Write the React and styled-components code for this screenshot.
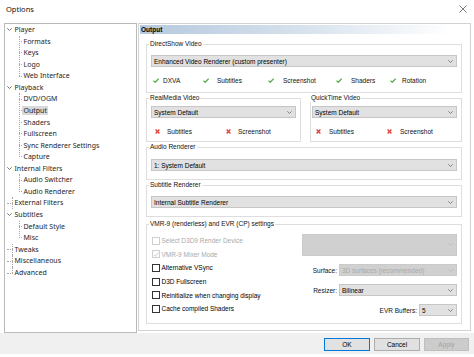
import React from "react";
import styled, { createGlobalStyle, css } from "styled-components";

const uiFont = `"Noto Sans", "Open Sans", sans-serif`;
const formFont = `"Liberation Sans", Arial, sans-serif`;

const GlobalStyle = createGlobalStyle`
  html, body {
    margin: 0;
    padding: 0;
    background: #fff;
  }
  body {
    font-family: ${formFont};
  }
  * {
    box-sizing: border-box;
  }
`;

const tree = [
  { label: "Player", children: ["Formats", "Keys", "Logo", "Web Interface"] },
  {
    label: "Playback",
    children: ["DVD/OGM", "Output", "Shaders", "Fullscreen", "Sync Renderer Settings", "Capture"],
  },
  { label: "Internal Filters", children: ["Audio Switcher", "Audio Renderer"] },
  { label: "External Filters" },
  { label: "Subtitles", children: ["Default Style", "Misc"] },
  { label: "Tweaks" },
  { label: "Miscellaneous" },
  { label: "Advanced" },
];

const dsFeatures = [
  { label: "DXVA", gap: 4 },
  { label: "Subtitles", gap: 8 },
  { label: "Screenshot", gap: 9 },
  { label: "Shaders", gap: 9 },
  { label: "Rotation", gap: 6 },
];

const vmrChecks = [
  { label: "Select D3D9 Render Device", disabled: true },
  { label: "VMR-9 Mixer Mode", disabled: true, checked: true },
  { label: "Alternative VSync" },
  { label: "D3D Fullscreen" },
  { label: "Reinitialize when changing display" },
  { label: "Cache compiled Shaders" },
];

const Check = () => (
  <svg width="6" height="5" viewBox="0 0 6 5">
    <path d="M0.5 2.6 L2.2 4.3 L5.6 0.6" fill="none" stroke="#5aad4e" strokeWidth="1.3" />
  </svg>
);

const Cross = () => (
  <svg width="5" height="5" viewBox="0 0 5 5">
    <path d="M0.6 0.6 L4.4 4.4 M4.4 0.6 L0.6 4.4" stroke="#e0413b" strokeWidth="1.4" />
  </svg>
);

const Chevron = ({ color = "#6d6d6d" }) => (
  <svg width="5" height="3" viewBox="0 0 5 3">
    <path d="M0.3 0.3 L2.5 2.5 L4.7 0.3" fill="none" stroke={color} strokeWidth="0.8" />
  </svg>
);

const Dropdown = ({ value, disabled, width }) => (
  <Select $disabled={disabled} $width={width}>
    <span>{value}</span>
    <Chevron color={disabled ? "#b8b8b8" : "#6d6d6d"} />
  </Select>
);

const Feature = ({ ok, label, gap }) => (
  <FeatureItem $gap={gap}>
    {ok ? <Check /> : <Cross />}
    <span>{label}</span>
  </FeatureItem>
);

const App = () => {
  return (
    <Window>
      <GlobalStyle />
      <TitleBar>
        <span>Options</span>
        <svg width="8" height="8" viewBox="0 0 8 8">
          <path d="M0.5 0.5 L7.5 7.5 M7.5 0.5 L0.5 7.5" stroke="#444" strokeWidth="0.7" />
        </svg>
      </TitleBar>

      <Body>
        <TreeBox>
          {tree.map((node, i) => (
            <Node key={node.label} $leaf={!node.children} $last={i === tree.length - 1}>
              <RootRow>
                <Slot $leaf={!node.children}>{node.children && <Chevron color="#555" />}</Slot>
                <NodeLabel>{node.label}</NodeLabel>
              </RootRow>
              {node.children && (
                <ChildList>
                  {node.children.map((child) => (
                    <ChildRow key={child}>
                      <Tick />
                      <NodeLabel $selected={child === "Output"}>{child}</NodeLabel>
                    </ChildRow>
                  ))}
                </ChildList>
              )}
            </Node>
          ))}
        </TreeBox>

        <Panel>
          <Header>Output</Header>
          <Content>
            <Group $mt={6} $pt={7} $pb={7}>
              <Legend>DirectShow Video</Legend>
              <Dropdown value="Enhanced Video Renderer (custom presenter)" />
              <FeatureRow>
                {dsFeatures.map((f) => (
                  <Feature key={f.label} ok label={f.label} gap={f.gap} />
                ))}
              </FeatureRow>
            </Group>

            <Pair>
              <Group $mt={0} $pt={4} $pb={5} $flex>
                <Legend>RealMedia Video</Legend>
                <Dropdown value="System Default" />
                <CrossRow>
                  <Feature label="Subtitles" gap={7} />
                  <Feature label="Screenshot" gap={7} />
                </CrossRow>
              </Group>
              <Group $mt={0} $pt={4} $pb={5} $pl={1} $flex>
                <Legend>QuickTime Video</Legend>
                <Dropdown value="System Default" />
                <CrossRow>
                  <Feature label="Subtitles" gap={8} />
                  <Feature label="Screenshot" gap={8} />
                </CrossRow>
              </Group>
            </Pair>

            <Group $mt={1} $pt={8} $pb={8}>
              <Legend>Audio Renderer</Legend>
              <Dropdown value="1: System Default" />
            </Group>

            <Group $mt={1} $pt={7} $pb={8}>
              <Legend>Subtitle Renderer</Legend>
              <Dropdown value="Internal Subtitle Renderer" />
            </Group>

            <Group $mt={3} $pt={6} $pb={7}>
              <Legend>VMR-9 (renderless) and EVR (CP) settings</Legend>
              <VmrGrid>
                <CheckColumn>
                  {vmrChecks.map((c) => (
                    <CheckRow key={c.label} $disabled={c.disabled}>
                      <Box $disabled={c.disabled}>
                        {c.checked && (
                          <svg width="6" height="5" viewBox="0 0 6 5">
                            <path d="M0.5 2.6 L2.2 4.3 L5.6 0.6" fill="none" stroke="#c4c4c4" strokeWidth="0.9" />
                          </svg>
                        )}
                      </Box>
                      <span>{c.label}</span>
                    </CheckRow>
                  ))}
                </CheckColumn>
                <OptionColumn>
                  <Dropdown value="" disabled />
                  <OptionRow>
                    <OptionLabel>Surface:</OptionLabel>
                    <Dropdown value="3D surfaces (recommended)" disabled width={118} />
                  </OptionRow>
                  <OptionRow>
                    <OptionLabel>Resizer:</OptionLabel>
                    <Dropdown value="Bilinear" width={118} />
                  </OptionRow>
                  <OptionRow>
                    <OptionLabel>EVR Buffers:</OptionLabel>
                    <Dropdown value="5" width={38} />
                  </OptionRow>
                </OptionColumn>
              </VmrGrid>
            </Group>
          </Content>
        </Panel>
      </Body>

      <Footer>
        <Button $primary>OK</Button>
        <Button>Cancel</Button>
        <Button $disabled>Apply</Button>
      </Footer>
    </Window>
  );
};

const Window = styled.div`
  width: 474px;
  height: 357px;
  display: flex;
  flex-direction: column;
  background: #fff;
  overflow: hidden;
`;

const TitleBar = styled.div`
  height: 18px;
  display: flex;
  align-items: center;
  justify-content: space-between;
  padding: 0 7px 0 6px;
  font: 7.5px ${uiFont};
  color: #111;
`;

const Body = styled.div`
  display: flex;
  align-items: flex-start;
  gap: 1px;
  padding: 5px 3px 0 4px;
`;

const TreeBox = styled.div`
  width: 133px;
  height: 310px;
  flex: none;
  border: 1px solid #b9b9b9;
  background: #fff;
  font: 7px ${uiFont};
  color: #1e1e1e;
`;

const Node = styled.div`
  position: relative;

  ${({ $leaf, $last }) =>
    $leaf &&
    css`
      &::before {
        content: "";
        position: absolute;
        left: 6.5px;
        top: 0;
        height: ${$last ? "6px" : "100%"};
        border-left: 1px dotted #a8a8a8;
      }
    `}
`;

const RootRow = styled.div`
  height: 11.57px;
  display: flex;
  align-items: center;
  padding-left: 1px;
`;

const Slot = styled.div`
  width: 7px;
  height: 100%;
  display: flex;
  align-items: center;
  justify-content: center;
  position: relative;

  ${({ $leaf }) =>
    $leaf &&
    css`
      &::after {
        content: "";
        position: absolute;
        left: 1px;
        right: 0;
        top: 50%;
        border-top: 1px dotted #a8a8a8;
      }
    `}
`;

const ChildList = styled.div`
  position: relative;

  &::before {
    content: "";
    position: absolute;
    left: 13.5px;
    top: 0;
    bottom: 5.5px;
    border-left: 1px dotted #a8a8a8;
  }
`;

const ChildRow = styled.div`
  height: 11.57px;
  display: flex;
  align-items: center;
  padding-left: 14px;
`;

const Tick = styled.span`
  width: 3px;
  border-top: 1px dotted #a8a8a8;
`;

const NodeLabel = styled.span`
  padding: 0 1.5px;
  line-height: 9.5px;
  white-space: nowrap;
  background: ${({ $selected }) => ($selected ? "#d9d9d9" : "transparent")};
`;

const Panel = styled.div`
  width: 333px;
  height: 308px;
  flex: none;
  border: 1px solid #d2d2d2;
  padding: 1px;
  display: flex;
  flex-direction: column;
`;

const Header = styled.div`
  height: 9px;
  padding-left: 1px;
  font: bold 6.5px/9px ${formFont};
  color: #000;
  background: linear-gradient(to right, #b6c9de 0%, #d3dfeb 45%, #ffffff 95%);
`;

const Content = styled.div`
  display: flex;
  flex-direction: column;
  padding: 0 7px 0 6px;
`;

const Group = styled.fieldset`
  margin: ${({ $mt }) => $mt}px 0 0;
  padding: ${({ $pt }) => $pt}px 4px ${({ $pb }) => $pb}px ${({ $pl }) => $pl ?? 4}px;
  border: 1px solid #dedede;
  min-width: 0;
  flex: ${({ $flex }) => ($flex ? "1 1 0" : "none")};
`;

const Legend = styled.legend`
  font: 6.5px/8px ${formFont};
  color: #111;
  padding: 0 1px;
  margin-left: -2px;
`;

const Pair = styled.div`
  display: flex;
  gap: 9px;
  margin-top: 1px;
`;

const Select = styled.div`
  height: 12px;
  width: ${({ $width }) => ($width ? `${$width}px` : "auto")};
  flex: ${({ $width }) => ($width ? "none" : "1 1 auto")};
  border: 1px solid ${({ $disabled }) => ($disabled ? "#cacaca" : "#c6c6c6")};
  background: ${({ $disabled }) => ($disabled ? "#d0d0d0" : "#e1e1e1")};
  color: ${({ $disabled }) => ($disabled ? "#a9a9a9" : "#000")};
  display: flex;
  align-items: center;
  justify-content: space-between;
  padding: 0 3px 0 2px;
  font: 6.5px ${formFont};
  white-space: nowrap;
`;

const FeatureRow = styled.div`
  display: grid;
  grid-template-columns: 50px 65px 68px 54px auto;
  height: 10px;
  margin-top: 8px;
  padding-left: 2px;
  align-items: center;
`;

const CrossRow = styled.div`
  display: grid;
  grid-template-columns: 71px auto;
  height: 10px;
  margin-top: 8px;
  padding-left: 4px;
  align-items: center;
`;

const FeatureItem = styled.div`
  display: flex;
  align-items: center;
  gap: ${({ $gap }) => $gap}px;
  font: 6.5px ${formFont};
  color: #111;
`;

const VmrGrid = styled.div`
  display: flex;
  justify-content: space-between;
`;

const CheckColumn = styled.div`
  display: flex;
  flex-direction: column;
  padding-left: 1px;
`;

const CheckRow = styled.div`
  height: 13.6px;
  display: flex;
  align-items: center;
  gap: 1.5px;
  font: 6.5px ${formFont};
  color: ${({ $disabled }) => ($disabled ? "#a9a9a9" : "#000")};
  white-space: nowrap;
`;

const Box = styled.span`
  width: 8px;
  height: 8px;
  border: 1px solid ${({ $disabled }) => ($disabled ? "#d0d0d0" : "#333")};
  background: #fff;
  display: flex;
  align-items: center;
  justify-content: center;
`;

const OptionColumn = styled.div`
  width: 155px;
  display: flex;
  flex-direction: column;
  gap: 9px;

  & > div {
    height: 11px;
  }
`;

const OptionRow = styled.div`
  display: flex;
  align-items: center;
  justify-content: flex-end;
  gap: 2px;
`;

const OptionLabel = styled.span`
  font: 6.5px ${formFont};
  color: #111;
  white-space: nowrap;
`;

const Footer = styled.div`
  height: 21px;
  background: #f0f0f0;
  display: flex;
  justify-content: flex-end;
  align-items: flex-start;
  gap: 4px;
  padding: 5px 5px 0;
`;

const Button = styled.div`
  width: ${({ $disabled }) => ($disabled ? 45 : 46)}px;
  height: 13px;
  display: flex;
  align-items: center;
  justify-content: center;
  font: 6.5px ${formFont};
  color: ${({ $disabled }) => ($disabled ? "#a3a3a3" : "#000")};
  background: ${({ $disabled }) => ($disabled ? "#cccccc" : "#e1e1e1")};
  border: 1px solid
    ${({ $primary, $disabled }) => ($primary ? "#0078d7" : $disabled ? "#bfbfbf" : "#adadad")};
`;

export default App;
